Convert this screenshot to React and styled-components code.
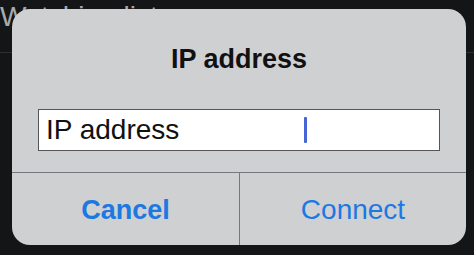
import React from 'react'
import styled, {createGlobalStyle} from 'styled-components'

const Global = createGlobalStyle`
  html, body {
    margin: 0;
    padding: 0;
    background: #141517;
    font-family: "Liberation Sans", Arial, sans-serif;
  }
`

const App = () => {
  return (
    <>
      <Global />
      <Screen>
        <BehindHeader>Watching list</BehindHeader>
        <BehindRule />
        <Dialog>
          <Upper>
            <Title>IP address</Title>
            <Field>
              <FieldText>IP address</FieldText>
              <Caret />
            </Field>
          </Upper>
          <Actions>
            <ActionButton $bold>Cancel</ActionButton>
            <ActionButton>Connect</ActionButton>
          </Actions>
        </Dialog>
      </Screen>
    </>
  )
}

export default App

const Screen = styled.div`
position: relative;
width: 474px;
height: 255px;
overflow: hidden;
background: #141517;
`
const BehindHeader = styled.div`
padding: 3px 0 0 0;
height: 49px;
font-size: 28px;
line-height: 28px;
color: #a9aaad;
white-space: nowrap;
`
const BehindRule = styled.div`
height: 1px;
background: #2d2e31;
`
const Dialog = styled.div`
position: absolute;
left: 12px;
top: 9px;
width: 454px;
height: 236px;
border-radius: 18px;
background: #cfd0d2;
display: flex;
flex-direction: column;
overflow: hidden;
`
const Upper = styled.div`
display: flex;
flex-direction: column;
align-items: center;
padding: 37px 26px 21px;
gap: 36px;
border-bottom: 1.5px solid #77787b;
`
const Title = styled.div`
font-size: 27px;
line-height: 27px;
font-weight: bold;
color: #111;
`
const Field = styled.div`
position: relative;
align-self: stretch;
height: 40px;
display: flex;
align-items: center;
padding-left: 7px;
background: #fff;
border: 1px solid #55565a;
`
const FieldText = styled.span`
font-size: 28px;
line-height: 28px;
color: #111;
`
const Caret = styled.span`
position: absolute;
left: 265px;
top: 7px;
width: 3px;
height: 26px;
border-radius: 1px;
background: #4766d6;
`
const Actions = styled.div`
flex: 1;
display: grid;
grid-template-columns: 1fr 1fr;
`
const ActionButton = styled.div`
display: flex;
align-items: center;
justify-content: center;
padding-top: 2px;
font-size: ${p => (p.$bold ? '27px' : '28px')};
font-weight: ${p => (p.$bold ? 'bold' : 'normal')};
color: #1c78e2;
& + & {
  border-left: 1.5px solid #77787b;
}
`
